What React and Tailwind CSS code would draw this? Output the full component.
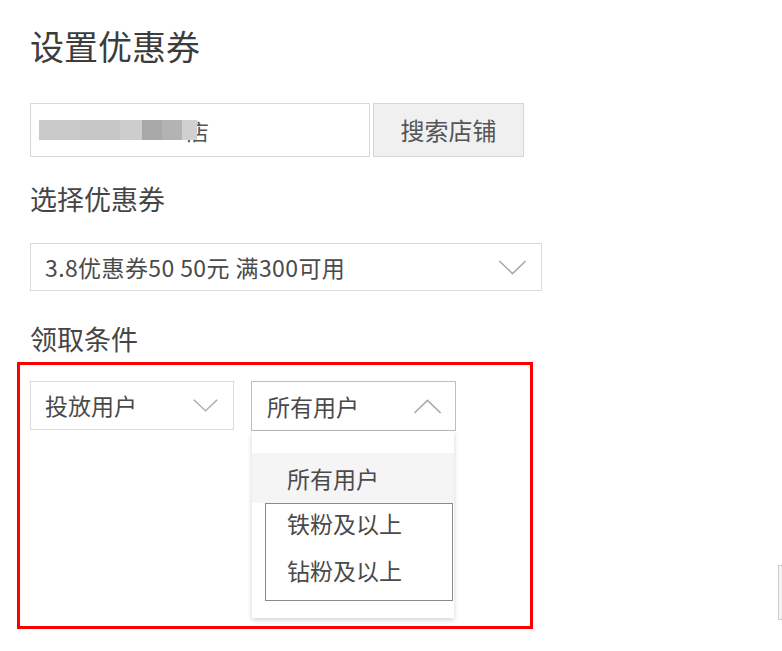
import React from "react";

const font = { fontFamily: '"Noto Sans CJK SC", "Noto Sans", sans-serif' };

function Chevron({ up = false, className = "" }) {
  return (
    <svg className={className} viewBox="0 0 30 16" fill="none" stroke="#a8a8a8" strokeWidth="1.6">
      {up ? <path d="M1 15 L15 1.5 L29 15" /> : <path d="M1 1 L15 14.5 L29 1" />}
    </svg>
  );
}

export default function App() {
  return (
    <div
      className="relative w-[782px] h-[651px] bg-white pl-[30px] text-[#3c3c3c] overflow-hidden"
      style={font}
    >
      <h1 className="pt-[29px] text-[34px] leading-none font-normal">设置优惠券</h1>

      {/* shop search, shop name blurred out */}
      <div className="mt-[40px] flex items-stretch h-[54px]">
        <div className="w-[340px] border border-[#d9d9d9] bg-white flex items-center">
          <div className="relative z-10 ml-[8px] flex shrink-0 h-[20px] blur-[0.6px]">
            <div className="w-[41px] bg-[#c9c9c9]" />
            <div className="w-[40px] bg-[#c7c7c7]" />
            <div className="w-[22px] bg-[#cdcdcd]" />
            <div className="w-[20px] bg-[#a9a9a9]" />
            <div className="w-[20px] bg-[#b3b3b3]" />
            <div className="w-[15px] bg-[#d0d0d0]" />
          </div>
          <span className="-ml-[10px] text-[22px] leading-none text-[#555]">店</span>
        </div>
        <button className="ml-[3px] w-[151px] border border-[#d6d6d6] bg-[#f0f0f0] text-[24px] leading-none text-[#555]">
          搜索店铺
        </button>
      </div>

      <div className="mt-[28px] text-[27px] leading-none text-[#454545]">选择优惠券</div>

      <div className="mt-[31px] w-[512px] h-[48px] border border-[#dadada] flex items-center justify-between pl-[14px] pr-[14px]">
        <span className="text-[23px] leading-none tracking-[0.4px] text-[#4a4a4a]">3.8优惠券50 50元 满300可用</span>
        <Chevron className="w-[29px] h-[15px]" />
      </div>

      <div className="mt-[34px] text-[27px] leading-none text-[#454545]">领取条件</div>

      {/* highlighted condition block */}
      <div className="mt-[10px] -ml-[13px] w-[516px] h-[267px] border-[3px] border-[#f00] pt-[16px] pl-[10px]">
        <div className="flex gap-[17px] items-start">
          <div className="w-[204px] h-[49px] border border-[#dadada] flex items-center justify-between pl-[14px] pr-[15px]">
            <span className="text-[23px] leading-none text-[#4a4a4a]">投放用户</span>
            <Chevron className="w-[25px] h-[15px]" />
          </div>

          <div className="relative">
            <div className="w-[205px] h-[50px] border border-[#bdbdbd] flex items-center justify-between pl-[15px] pr-[13px]">
              <span className="text-[23px] leading-none text-[#4a4a4a]">所有用户</span>
              <Chevron up className="w-[29px] h-[15px]" />
            </div>

            <div className="absolute left-[1px] top-full w-[202px] h-[187px] bg-white shadow-[0_2px_5px_rgba(0,0,0,0.18)] pt-[22px]">
              <div className="h-[50px] bg-[#f5f5f5] flex items-center pl-[35px] text-[23px] leading-none text-[#4a4a4a]">
                所有用户
              </div>
              <div className="ml-[13px] w-[188px] h-[98px] border-[1.5px] border-[#8a8a8a] flex flex-col pt-[8px] gap-[24px] pl-[21px] text-[23px] leading-none text-[#4a4a4a]">
                <span>铁粉及以上</span>
                <span>钻粉及以上</span>
              </div>
            </div>
          </div>
        </div>
      </div>

      {/* partially visible control at the right edge */}
      <div className="absolute left-[778px] top-[565px] w-[12px] h-[55px] border border-[#cfcfcf] bg-[#f4f4f4]" />
    </div>
  );
}
